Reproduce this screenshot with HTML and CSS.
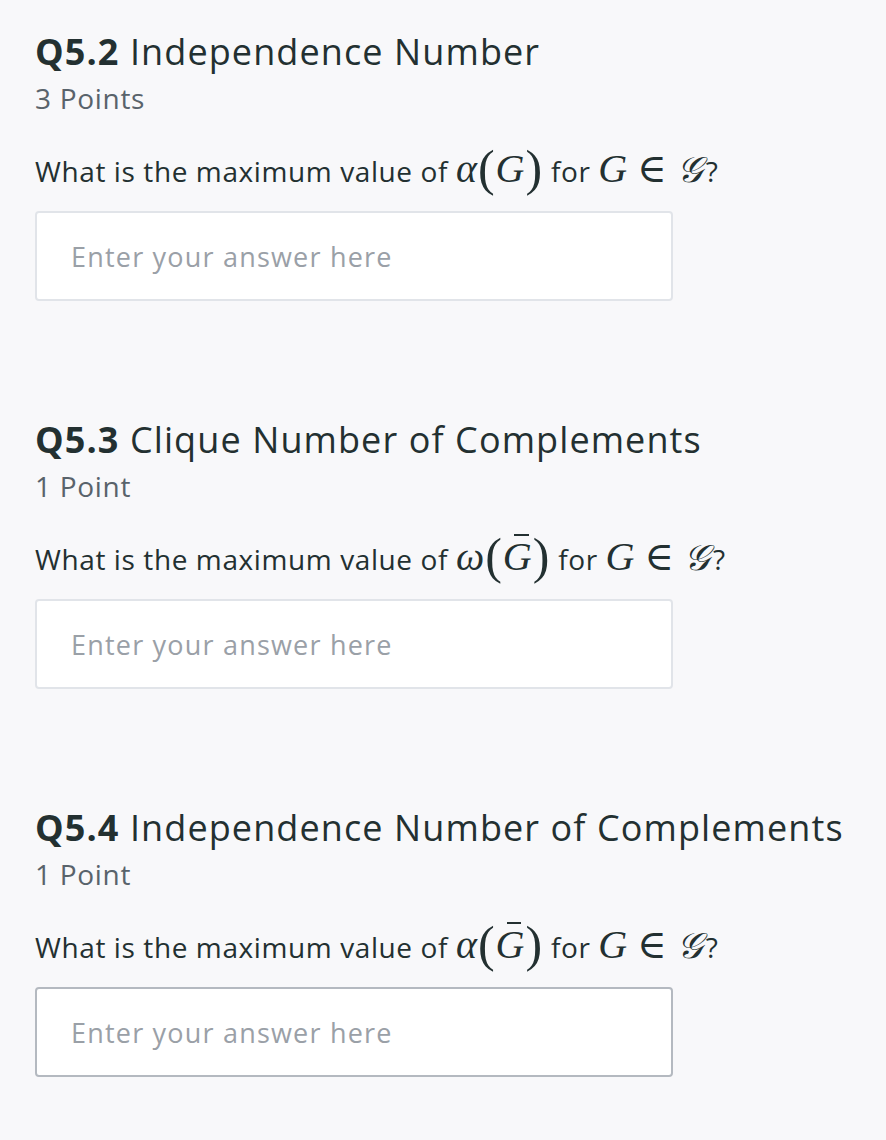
FILE: index.html
```html
<!DOCTYPE html>
<html lang="en">
<head>
<meta charset="utf-8">
<title>Questions</title>
<link rel="stylesheet" href="styles.css">
</head>
<body>
<main class="page">
  <section class="question">
    <h2 class="q-title"><span class="q-num">Q5.2</span> Independence Number</h2>
    <div class="q-points">3 Points</div>
    <p class="q-text">What is the maximum value of <span class="math"><span class="mi">α</span><span class="paren">(</span><span class="mi">G</span><span class="paren">)</span></span> for <span class="math"><span class="mi">G</span><span class="rel">∈</span><span class="cal">𝒢</span></span>?</p>
    <input class="answer" type="text" placeholder="Enter your answer here">
  </section>
  <section class="question">
    <h2 class="q-title"><span class="q-num">Q5.3</span> Clique Number of Complements</h2>
    <div class="q-points">1 Point</div>
    <p class="q-text">What is the maximum value of <span class="math"><span class="mi">ω</span><span class="paren">(</span><span class="mi bar">G</span><span class="paren">)</span></span> for <span class="math"><span class="mi">G</span><span class="rel">∈</span><span class="cal">𝒢</span></span>?</p>
    <input class="answer" type="text" placeholder="Enter your answer here">
  </section>
  <section class="question">
    <h2 class="q-title"><span class="q-num">Q5.4</span> Independence Number of Complements</h2>
    <div class="q-points">1 Point</div>
    <p class="q-text">What is the maximum value of <span class="math"><span class="mi">α</span><span class="paren">(</span><span class="mi bar">G</span><span class="paren">)</span></span> for <span class="math"><span class="mi">G</span><span class="rel">∈</span><span class="cal">𝒢</span></span>?</p>
    <input class="answer answer-active" type="text" placeholder="Enter your answer here">
  </section>
</main>
</body>
</html>
```

FILE: styles.css
```css
html, body {
  margin: 0;
  padding: 0;
  background: #f8f8fa;
}

body {
  font-family: "Open Sans", Lato, sans-serif;
  color: #233031;
}

.page {
  padding: 30px 0 0 35px;
}

.question {
  height: 388px;
}

.q-title {
  margin: 0;
  font-size: 36px;
  line-height: 44px;
  font-weight: 400;
  letter-spacing: 1.1px;
  color: #233031;
}

.q-num {
  font-weight: 700;
}

.q-points {
  margin-top: 6px;
  font-size: 28px;
  line-height: 36px;
  letter-spacing: 0.7px;
  color: #59636b;
}

.q-text {
  margin: 32px 0 23px;
  font-size: 28px;
  line-height: 40px;
  height: 40px;
  letter-spacing: 0.6px;
  white-space: nowrap;
}

.math {
  font-family: "Liberation Serif", "DejaVu Serif", serif;
  font-size: 40px;
  line-height: 40px;
  letter-spacing: 0;
}

.mi {
  font-style: italic;
}

.bar {
  position: relative;
}

.bar::before {
  content: "";
  position: absolute;
  left: 11px;
  right: 3px;
  top: 0;
  height: 2px;
  background: currentColor;
}

.paren {
  font-size: 50px;
  line-height: 40px;
  vertical-align: -3px;
  margin: 0 1px;
}

.rel {
  font-style: normal;
  margin: 0 10px;
}

.cal {
  font-family: "DejaVu Serif", serif;
  font-style: italic;
  font-size: 36px;
  margin-right: 3px;
}

.answer {
  display: block;
  box-sizing: border-box;
  width: 638px;
  height: 90px;
  margin: 0;
  padding: 0 0 0 34px;
  border: 2px solid #e1e4e9;
  border-radius: 4px;
  background: #ffffff;
  font-family: "Open Sans", Lato, sans-serif;
  font-size: 27px;
  letter-spacing: 1.2px;
  color: #233031;
  outline: none;
}

.answer::placeholder {
  color: #9aa0a7;
}

.answer-active {
  border-color: #b4b9c0;
}
```
